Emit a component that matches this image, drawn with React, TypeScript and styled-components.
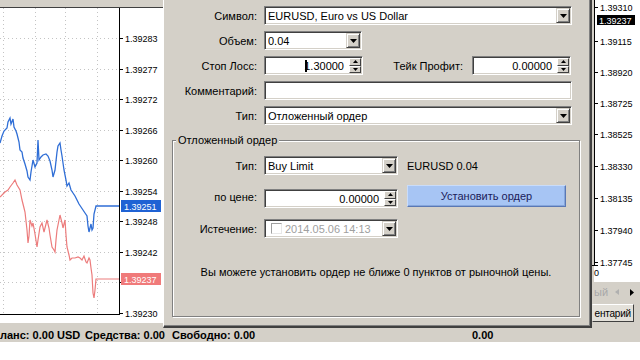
import React from "react";
import styled, { createGlobalStyle } from "styled-components";

const GlobalStyle = createGlobalStyle`
  html, body {
    margin: 0;
    padding: 0;
    background: #fff;
  }
  body {
    font-family: "Liberation Sans", Arial, sans-serif;
    font-size: 11px;
    color: #000;
  }
`;

const FACE = "#d4d0c8";

const Screen = styled.div`
  width: 640px;
  height: 360px;
  overflow: hidden;
  background: #fff;
  display: flex;
  flex-direction: column;
`;

const Workspace = styled.div`
  display: flex;
  height: 328px;
  background: ${FACE};
`;

/* ---------- left chart window ---------- */

const ChartWindow = styled.div`
  width: 163px;
  flex-shrink: 0;
  display: flex;
  flex-direction: column;
`;

const WindowStrip = styled.div`
  height: 7px;
  background: ${FACE};
`;

const ChartCanvas = styled.div`
  height: 315px;
  background: #fff;
  border-top: 1px solid #404040;
  overflow: hidden;
  svg {
    display: block;
  }
`;

/* ---------- dialog ---------- */

const Dialog = styled.div`
  width: 429px;
  height: 328px;
  flex-shrink: 0;
  box-sizing: border-box;
  background: ${FACE};
  border-left: 1px solid #fff;
  border-right: 2px solid #404040;
  border-bottom: 2px solid #404040;
  box-shadow: inset -1px -1px 0 #808080;
  padding: 3px 0 0 6px;
`;

const FormRow = styled.div`
  display: flex;
  align-items: center;
  height: 25px;
`;

const FieldLabel = styled.span<{ $w: number; $gap?: number }>`
  width: ${(p) => p.$w}px;
  margin-right: ${(p) => p.$gap ?? 7}px;
  flex-shrink: 0;
  text-align: right;
  white-space: nowrap;
`;

const Field = styled.div<{ $w: number }>`
  width: ${(p) => p.$w}px;
  height: 19px;
  flex-shrink: 0;
  box-sizing: border-box;
  background: #fff;
  border: 1px solid;
  border-color: #808080 #fff #fff #808080;
  box-shadow: inset 1px 1px 0 #404040, inset -1px -1px 0 ${FACE};
  padding: 1px 1px 1px 3px;
  display: flex;
  align-items: center;
`;

const FieldValue = styled.span<{ $align?: "left" | "right"; $muted?: boolean }>`
  flex: 1;
  text-align: ${(p) => p.$align ?? "left"};
  color: ${(p) => (p.$muted ? "#a0a0a0" : "#000")};
  white-space: nowrap;
  overflow: hidden;
  padding-right: ${(p) => (p.$align === "right" ? 5 : 0)}px;
`;

const Cursor = styled.span`
  position: relative;
  &::after {
    content: "";
    position: absolute;
    left: 1px;
    top: -1px;
    width: 2px;
    height: 13px;
    background: #000;
  }
`;

const DropButton = styled.div`
  width: 14px;
  height: 15px;
  flex-shrink: 0;
  box-sizing: border-box;
  background: ${FACE};
  border: 1px solid;
  border-color: ${FACE} #404040 #404040 ${FACE};
  box-shadow: inset 1px 1px 0 #fff, inset -1px -1px 0 #808080;
  display: flex;
  align-items: center;
  justify-content: center;
`;

const SpinColumn = styled.div`
  width: 12px;
  height: 15px;
  flex-shrink: 0;
  display: flex;
  flex-direction: column;
`;

const SpinHalf = styled.div`
  flex: 1;
  box-sizing: border-box;
  background: ${FACE};
  border: 1px solid;
  border-color: #fff #404040 #404040 #fff;
  display: flex;
  align-items: center;
  justify-content: center;
`;

const CheckBox = styled.span`
  width: 11px;
  height: 11px;
  margin-right: 3px;
  margin-left: 3px;
  flex-shrink: 0;
  box-sizing: border-box;
  background: #fff;
  border: 1px solid;
  border-color: #a0a0a0 #e8e8e8 #e8e8e8 #a0a0a0;
`;

const Group = styled.div`
  position: relative;
  margin: 12px 0 0 2px;
  width: 408px;
  height: 177px;
  box-sizing: border-box;
  border: 1px solid #808080;
  box-shadow: inset 1px 1px 0 #fff, 1px 1px 0 #fff;
`;

const GroupTitle = styled.span`
  position: absolute;
  top: -8px;
  left: 3px;
  padding: 0 2px;
  line-height: 14px;
  background: ${FACE};
`;

const GroupRow = styled.div<{ $top: number; $h: number }>`
  display: flex;
  align-items: flex-end;
  margin-top: ${(p) => p.$top}px;
  height: ${(p) => p.$h}px;
  & > span:first-child {
    align-self: center;
  }
`;

const InfoText = styled.span`
  margin-left: 9px;
  align-self: center;
`;

const ActionButton = styled.button`
  margin-left: 9px;
  margin-bottom: 1px;
  width: 159px;
  height: 22px;
  padding: 0;
  font: inherit;
  color: #1c1c5a;
  background: #a7c5f4;
  border: 1px solid;
  border-color: #c9dcfa #5a78b4 #5a78b4 #c9dcfa;
  box-shadow: inset -1px -1px 0 #86a6dc;
`;

const Notice = styled.div`
  margin-top: 27px;
  line-height: 14px;
  text-align: center;
`;

/* ---------- right window ---------- */

const SideWindow = styled.div`
  flex: 1;
  display: flex;
  flex-direction: column;
  overflow: hidden;
  svg {
    display: block;
  }
`;

const ScrollRow = styled.div`
  height: 20px;
  display: flex;
  align-items: center;
  padding-left: 2px;
  color: #a8a8a8;
`;

const ScrollArrow = styled.span<{ $gap: number }>`
  display: flex;
  margin-left: ${(p) => p.$gap}px;
`;

const HeaderRow = styled.div`
  margin-top: 2px;
  height: 18px;
  display: flex;
`;

const HeaderCell = styled.div`
  width: 42px;
  box-sizing: border-box;
  background: #e4e1da;
  border: 1px solid;
  border-color: #fff #404040 #404040 transparent;
  display: flex;
  justify-content: flex-end;
  align-items: center;
  white-space: nowrap;
  font-size: 10px;
  letter-spacing: -0.2px;
  padding-right: 2px;
`;

/* ---------- status ---------- */

const StatusBar = styled.div`
  height: 14px;
  line-height: 14px;
  background: ${FACE};
  font-weight: bold;
  display: flex;
  white-space: nowrap;
  overflow: hidden;
`;

const StatusCell = styled.span<{ $w: number }>`
  width: ${(p) => p.$w}px;
  flex-shrink: 0;
`;

/* ---------- drawings ---------- */

const DownArrow = () => (
  <svg width="7" height="4" viewBox="0 0 7 4">
    <path d="M0 0h7L3.5 4z" fill="#000" />
  </svg>
);

const SpinArrow = ({ up }: { up?: boolean }) => (
  <svg width="5" height="3" viewBox="0 0 5 3">
    <path d={up ? "M2.5 0L5 3H0z" : "M0 0h5L2.5 3z"} fill="#000" />
  </svg>
);

const Spinner = () => (
  <SpinColumn>
    <SpinHalf>
      <SpinArrow up />
    </SpinHalf>
    <SpinHalf>
      <SpinArrow />
    </SpinHalf>
  </SpinColumn>
);

const toPts = (pts: number[][]) => pts.map((p) => p.join(",")).join(" ");

const blueLine = [
  [0, 143], [2, 136], [4, 131], [7, 128], [8, 122], [10, 118], [11, 124], [13, 119], [14, 127],
  [16, 131], [17, 134], [19, 142], [20, 150], [22, 152], [23, 158], [25, 164], [27, 171],
  [28, 177], [30, 180], [31, 172], [33, 160], [35, 167], [37, 163], [38, 140], [39, 160],
  [41, 157], [43, 155], [46, 154], [48, 156], [50, 161], [52, 170], [53, 177], [55, 170],
  [57, 152], [58, 146], [60, 143], [61, 150], [62, 156], [64, 170], [66, 180], [67, 186],
  [69, 183], [71, 190], [73, 193], [75, 196], [77, 200], [79, 204], [81, 207], [83, 210],
  [85, 213], [87, 216], [88, 226], [89, 232], [91, 224], [92, 230], [93, 228], [94, 214],
  [96, 206], [119, 206],
];

const redLine = [
  [0, 197], [3, 194], [5, 192], [8, 190], [10, 187], [13, 183], [15, 180], [17, 185], [20, 190],
  [22, 200], [24, 208], [25, 212], [27, 230], [28, 243], [29, 236], [30, 220], [32, 226],
  [33, 223], [35, 234], [37, 247], [38, 240], [40, 227], [42, 223], [44, 232], [47, 220],
  [49, 228], [50, 235], [52, 247], [54, 250], [55, 252], [56, 240], [57, 230], [59, 220],
  [60, 215], [62, 223], [63, 228], [65, 220], [66, 235], [67, 247], [69, 255], [70, 260],
  [72, 258], [75, 258], [78, 257], [80, 258], [82, 260], [84, 256], [86, 262], [87, 263],
  [89, 258], [90, 260], [91, 268], [92, 275], [93, 293], [94, 298], [95, 290], [96, 279],
  [119, 279],
];

// the 9th level (1.39236) sits under the red bid label, so only its tick shows
const leftPrices = [
  "1.39283", "1.39277", "1.39272", "1.39266", "1.39260",
  "1.39254", "1.39248", "1.39242", "", "1.39230",
];

const PriceChart = () => (
  <svg width="163" height="315" viewBox="0 8 163 315" fontFamily="Liberation Sans, Arial, sans-serif" fontSize="9">
    {[3, 35, 65, 97].map((x) => (
      <line key={x} x1={x + 0.5} y1={8} x2={x + 0.5} y2={314} stroke="#c4c4c4" strokeDasharray="1 3" />
    ))}
    {leftPrices.map((p, i) => {
      const y = Math.round(38 + i * 30.5) + 0.5;
      return (
        <g key={i}>
          {i < 9 && <line x1={0} y1={y} x2={119} y2={y} stroke="#c4c4c4" strokeDasharray="1 3" />}
          <line x1={119} y1={y} x2={123} y2={y} stroke="#000" />
          {p && <text x={125} y={y + 3.5} fill="#000">{p}</text>}
        </g>
      );
    })}
    <polyline points={toPts(redLine)} fill="none" stroke="#ec7c7c" strokeWidth="1.2" />
    <polyline points={toPts(blueLine)} fill="none" stroke="#2f6ed6" strokeWidth="1.3" />
    <line x1={119.5} y1={8} x2={119.5} y2={314.5} stroke="#000" />
    <line x1={0} y1={314.5} x2={120} y2={314.5} stroke="#000" />
    <rect x={121} y={200} width={40} height={12} fill="#1f62d4" />
    <text x={124} y={209.5} fill="#fff">1.39251</text>
    <rect x={121} y={273} width={40} height={12} fill="#f07a7a" />
    <text x={124} y={282.5} fill="#fff">1.39237</text>
  </svg>
);

const rightPrices: [string, number][] = [
  ["1.39310", 7], ["1.39115", 41], ["1.38920", 72], ["1.38725", 103], ["1.38525", 134],
  ["1.38330", 166], ["1.38135", 198], ["1.37940", 230], ["1.37745", 262],
];

const SideChart = () => (
  <svg width="48" height="282" viewBox="592 0 48 282" fontFamily="Liberation Sans, Arial, sans-serif" fontSize="9">
    <rect x={592} y={0} width={48} height={282} fill="#fff" />
    <rect x={592} y={0} width={2} height={282} fill={FACE} />
    <line x1={594.5} y1={0} x2={594.5} y2={266} stroke="#000" />
    <line x1={592} y1={265.5} x2={598} y2={265.5} stroke="#000" />
    <text x={594} y={276} fill="#000">0</text>
    {rightPrices.map(([p, y]) => (
      <g key={p}>
        <line x1={595} y1={y + 0.5} x2={598} y2={y + 0.5} stroke="#000" />
        <text x={600} y={y + 3.5} fill="#000">{p}</text>
      </g>
    ))}
    <rect x={597} y={15} width={38} height={10} fill="#000" />
    <text x={599} y={23.5} fill="#fff">1.39237</text>
  </svg>
);

const ArrowLeft = () => (
  <svg width="4" height="6" viewBox="0 0 4 6">
    <path d="M4 0v6L0 3z" fill="#b0b0b0" />
  </svg>
);

const ArrowRight = () => (
  <svg width="4" height="7" viewBox="0 0 4 7">
    <path d="M0 0v7l4-3.5z" fill="#000" />
  </svg>
);

export default function App() {
  return (
    <>
      <GlobalStyle />
      <Screen>
        <Workspace>
          <ChartWindow>
            <WindowStrip />
            <ChartCanvas>
              <PriceChart />
            </ChartCanvas>
          </ChartWindow>

          <Dialog>
            <FormRow>
              <FieldLabel $w={87}>Символ:</FieldLabel>
              <Field $w={308}>
                <FieldValue>EURUSD, Euro vs US Dollar</FieldValue>
                <DropButton><DownArrow /></DropButton>
              </Field>
            </FormRow>
            <FormRow>
              <FieldLabel $w={87}>Объем:</FieldLabel>
              <Field $w={98}>
                <FieldValue>0.04</FieldValue>
                <DropButton><DownArrow /></DropButton>
              </Field>
            </FormRow>
            <FormRow>
              <FieldLabel $w={87}>Стоп Лосс:</FieldLabel>
              <Field $w={99}>
                <FieldValue $align="right"><Cursor>1</Cursor>.30000</FieldValue>
                <Spinner />
              </Field>
              <FieldLabel $w={100} $gap={9}>Тейк Профит:</FieldLabel>
              <Field $w={99}>
                <FieldValue $align="right">0.00000</FieldValue>
                <Spinner />
              </Field>
            </FormRow>
            <FormRow>
              <FieldLabel $w={87}>Комментарий:</FieldLabel>
              <Field $w={308}>
                <FieldValue />
              </Field>
            </FormRow>
            <FormRow>
              <FieldLabel $w={87}>Тип:</FieldLabel>
              <Field $w={308}>
                <FieldValue>Отложенный ордер</FieldValue>
                <DropButton><DownArrow /></DropButton>
              </Field>
            </FormRow>

            <Group>
              <GroupTitle>Отложенный ордер</GroupTitle>
              <GroupRow $top={15} $h={19}>
                <FieldLabel $w={84}>Тип:</FieldLabel>
                <Field $w={134}>
                  <FieldValue>Buy Limit</FieldValue>
                  <DropButton><DownArrow /></DropButton>
                </Field>
                <InfoText>EURUSD 0.04</InfoText>
              </GroupRow>
              <GroupRow $top={10} $h={23}>
                <FieldLabel $w={84}>по цене:</FieldLabel>
                <Field $w={134}>
                  <FieldValue $align="right">0.00000</FieldValue>
                  <Spinner />
                </Field>
                <ActionButton>Установить ордер</ActionButton>
              </GroupRow>
              <GroupRow $top={11} $h={19}>
                <FieldLabel $w={84}>Истечение:</FieldLabel>
                <Field $w={134}>
                  <CheckBox />
                  <FieldValue $muted>2014.05.06 14:13</FieldValue>
                  <DropButton><DownArrow /></DropButton>
                </Field>
              </GroupRow>
              <Notice>Вы можете установить ордер не ближе 0 пунктов от рыночной цены.</Notice>
            </Group>
          </Dialog>

          <SideWindow>
            <SideChart />
            <ScrollRow>
              <span>ый</span>
              <ScrollArrow $gap={7}><ArrowLeft /></ScrollArrow>
              <ScrollArrow $gap={11}><ArrowRight /></ScrollArrow>
            </ScrollRow>
            <HeaderRow>
              <HeaderCell>ентарий</HeaderCell>
            </HeaderRow>
          </SideWindow>
        </Workspace>

        <StatusBar>
          <StatusCell $w={85}>ланс: 0.00 USD</StatusCell>
          <StatusCell $w={87}>Средства: 0.00</StatusCell>
          <StatusCell $w={300}>Свободно: 0.00</StatusCell>
          <StatusCell $w={60}>0.00</StatusCell>
        </StatusBar>
      </Screen>
    </>
  );
}
